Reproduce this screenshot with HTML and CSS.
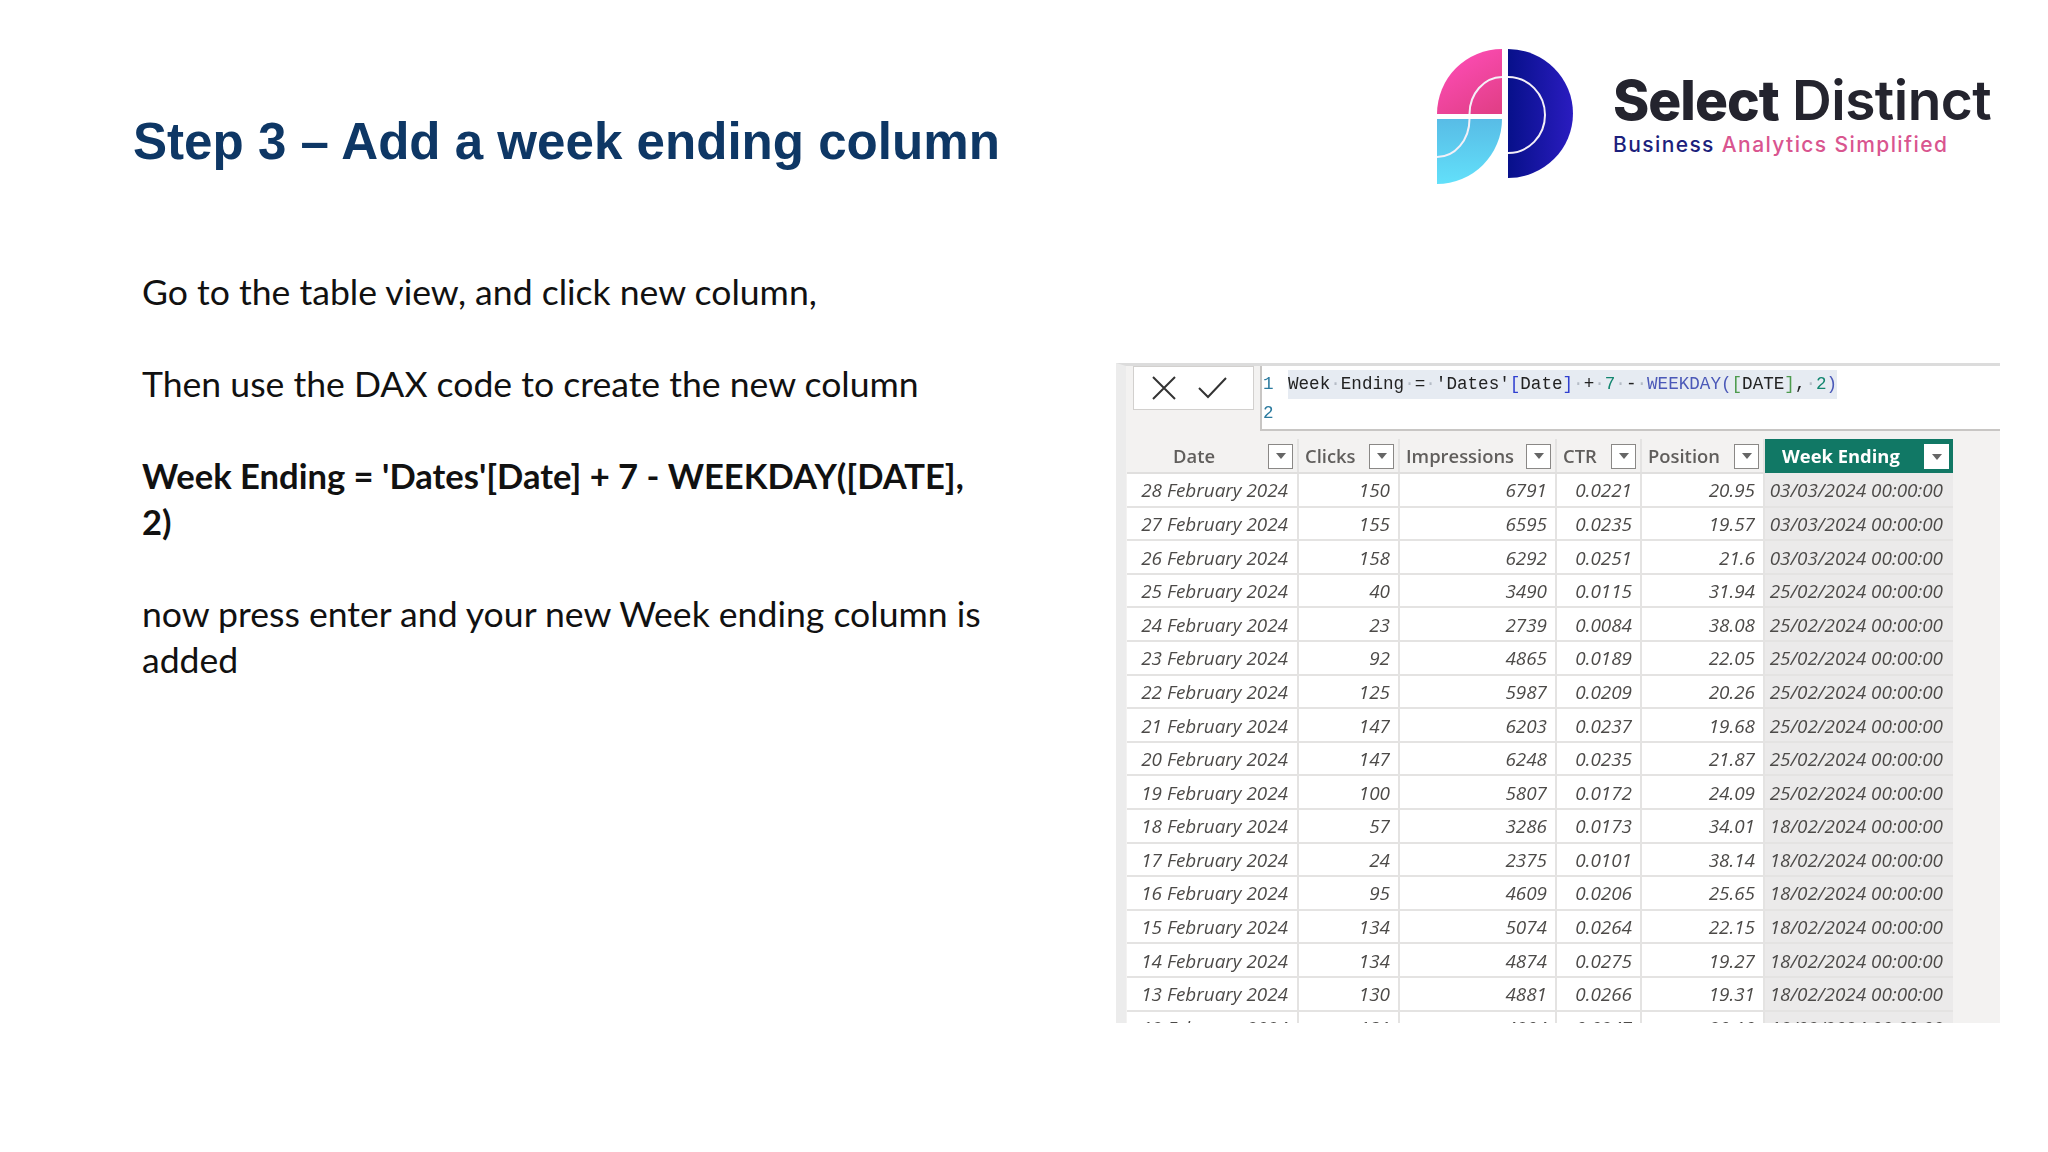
FILE: index.html
```html
<!DOCTYPE html>
<html lang="en">
<head>
<meta charset="utf-8">
<title>Step 3 – Add a week ending column</title>
<link rel="stylesheet" href="styles.css">
</head>
<body>
<main class="slide">
  <section class="left">
    <h1 class="title">Step 3 – Add a week ending column</h1>
    <p class="para">Go to the table view, and click new column,</p>
    <p class="para">Then use the DAX code to create the new column</p>
    <p class="para strong">Week Ending = 'Dates'[Date] + 7 - WEEKDAY([DATE], 2)</p>
    <p class="para">now press enter and your new Week ending column is added</p>
  </section>
  <section class="right">
    <div class="logo">
      <svg class="logo-mark" viewBox="1437 49 136 135" width="136" height="135" aria-hidden="true">
        <defs>
          <linearGradient id="gPink" x1="0.2" y1="0" x2="0.8" y2="1"><stop offset="0" stop-color="#ff4db8"/><stop offset="1" stop-color="#e23f88"/></linearGradient>
          <linearGradient id="gBlue" x1="0" y1="0" x2="0" y2="1"><stop offset="0" stop-color="#58bce6"/><stop offset="1" stop-color="#62e0fa"/></linearGradient>
          <linearGradient id="gNavy" x1="0" y1="0" x2="1" y2="0"><stop offset="0" stop-color="#07108a"/><stop offset="1" stop-color="#2a1cc0"/></linearGradient>
        </defs>
        <path d="M1437 114A65 65 0 0 1 1502 49V114Z" fill="url(#gPink)"/>
        <path d="M1437 119H1502A65 65 0 0 1 1437 184Z" fill="url(#gBlue)"/>
        <path d="M1508 49A65 64.5 0 0 1 1508 178Z" fill="url(#gNavy)"/>
        <path d="M1502 77A33 37 0 0 0 1469.500 114M1469.500 119A32.500 38 0 0 1 1437 157M1508 77A37 38 0 0 1 1508 153" fill="none" stroke="#f4f0f8" stroke-width="2"/>
      </svg>
      <div class="logo-text">
        <div class="logo-name"><b>Select</b> <span>Distinct</span></div>
        <div class="logo-tag"><span class="tag-navy">Business</span> <span class="tag-pink">Analytics Simplified</span></div>
      </div>
    </div>
    <div class="panel">
      <div class="formula-row">
        <div class="buttons">
          <svg class="icon-x" width="24" height="24" viewBox="0 0 24 24" aria-hidden="true"><path d="M1 1L23 23M23 1L1 23" stroke="#333" stroke-width="2" fill="none"/></svg>
          <svg class="icon-check" width="29" height="22" viewBox="0 0 29 22" aria-hidden="true"><path d="M1 11L10 20L28 1" stroke="#333" stroke-width="2" fill="none"/></svg>
        </div>
        <div class="formula">
          <div class="code-line"><span class="ln">1</span><code class="code"><span>Week</span><i>·</i><span>Ending</span><i>·</i><span>=</span><i>·</i><span>'Dates'</span><span class="c-br">[</span><span>Date</span><span class="c-br">]</span><i>·</i><span>+</span><i>·</i><span class="c-num">7</span><i>·</i><span>-</span><i>·</i><span class="c-fn">WEEKDAY(</span><span class="c-gr">[</span><span>DATE</span><span class="c-gr">]</span><span>,</span><i>·</i><span class="c-num">2</span><span class="c-fn">)</span></code></div>
          <div class="code-line"><span class="ln">2</span></div>
        </div>
      </div>
      <table class="grid">
        <colgroup><col class="c1"><col class="c2"><col class="c3"><col class="c4"><col class="c5"><col class="c6"></colgroup>
        <thead>
          <tr>
            <th><div class="th th-center"><span class="th-label">Date</span><span class="filter"></span></div></th>
            <th><div class="th"><span class="th-label">Clicks</span><span class="filter"></span></div></th>
            <th><div class="th"><span class="th-label">Impressions</span><span class="filter"></span></div></th>
            <th><div class="th"><span class="th-label">CTR</span><span class="filter"></span></div></th>
            <th><div class="th"><span class="th-label">Position</span><span class="filter"></span></div></th>
            <th class="active"><div class="th th-active"><span class="th-label">Week Ending</span><span class="filter"></span></div></th>
          </tr>
        </thead>
        <tbody>
          <tr><td>28 February 2024</td><td>150</td><td>6791</td><td>0.0221</td><td>20.95</td><td>03/03/2024 00:00:00</td></tr>
          <tr><td>27 February 2024</td><td>155</td><td>6595</td><td>0.0235</td><td>19.57</td><td>03/03/2024 00:00:00</td></tr>
          <tr><td>26 February 2024</td><td>158</td><td>6292</td><td>0.0251</td><td>21.6</td><td>03/03/2024 00:00:00</td></tr>
          <tr><td>25 February 2024</td><td>40</td><td>3490</td><td>0.0115</td><td>31.94</td><td>25/02/2024 00:00:00</td></tr>
          <tr><td>24 February 2024</td><td>23</td><td>2739</td><td>0.0084</td><td>38.08</td><td>25/02/2024 00:00:00</td></tr>
          <tr><td>23 February 2024</td><td>92</td><td>4865</td><td>0.0189</td><td>22.05</td><td>25/02/2024 00:00:00</td></tr>
          <tr><td>22 February 2024</td><td>125</td><td>5987</td><td>0.0209</td><td>20.26</td><td>25/02/2024 00:00:00</td></tr>
          <tr><td>21 February 2024</td><td>147</td><td>6203</td><td>0.0237</td><td>19.68</td><td>25/02/2024 00:00:00</td></tr>
          <tr><td>20 February 2024</td><td>147</td><td>6248</td><td>0.0235</td><td>21.87</td><td>25/02/2024 00:00:00</td></tr>
          <tr><td>19 February 2024</td><td>100</td><td>5807</td><td>0.0172</td><td>24.09</td><td>25/02/2024 00:00:00</td></tr>
          <tr><td>18 February 2024</td><td>57</td><td>3286</td><td>0.0173</td><td>34.01</td><td>18/02/2024 00:00:00</td></tr>
          <tr><td>17 February 2024</td><td>24</td><td>2375</td><td>0.0101</td><td>38.14</td><td>18/02/2024 00:00:00</td></tr>
          <tr><td>16 February 2024</td><td>95</td><td>4609</td><td>0.0206</td><td>25.65</td><td>18/02/2024 00:00:00</td></tr>
          <tr><td>15 February 2024</td><td>134</td><td>5074</td><td>0.0264</td><td>22.15</td><td>18/02/2024 00:00:00</td></tr>
          <tr><td>14 February 2024</td><td>134</td><td>4874</td><td>0.0275</td><td>19.27</td><td>18/02/2024 00:00:00</td></tr>
          <tr><td>13 February 2024</td><td>130</td><td>4881</td><td>0.0266</td><td>19.31</td><td>18/02/2024 00:00:00</td></tr>
          <tr><td>12 February 2024</td><td>131</td><td>4804</td><td>0.0247</td><td>20.10</td><td>18/02/2024 00:00:00</td></tr>
        </tbody>
      </table>
    </div>
  </section>
</main>
</body>
</html>
```
FILE: styles.css
```css
html, body { margin: 0; padding: 0; background: #fff; }
.slide { width: 2048px; height: 1152px; display: flex; overflow: hidden; background: #fff; }
.left { width: 1116px; flex: none; padding: 109px 0 0 133px; box-sizing: border-box; }
.title { margin: 0 0 94px; font: 700 51.1px/66px "Liberation Sans", Arial, sans-serif; color: #0e3765; white-space: nowrap; }
.para { margin: 0 0 46px 9px; width: 852px; font: 400 35.6px/46px Lato, "Open Sans", sans-serif; color: #111; }
.strong { font-weight: 700; font-size: 34.6px; }
.right { flex: none; width: 884px; padding-top: 49px; box-sizing: border-box; }
.logo { display: flex; height: 135px; margin: 0 0 179px 321px; }
.logo-mark { flex: none; display: block; }
.logo-text { margin-left: 40px; padding-top: 21px; }
.logo-name { font: 600 55px/60px Inter, sans-serif; color: #24242e; letter-spacing: -0.5px; white-space: nowrap; }
.logo-name b { font-weight: 800; letter-spacing: -1px; }
.logo-tag { margin-top: 2px; font: 500 21px/26px Inter, sans-serif; letter-spacing: 1.4px; white-space: nowrap; }
.tag-navy { color: #1c1f7c; }
.tag-pink { color: #d9558f; }
.panel { width: 884px; height: 660px; overflow: hidden; box-sizing: border-box; background: #f3f2f1; border-top: 3px solid #dcdcdc; border-left: 10px solid #ececec; filter: blur(0.35px); }
.formula-row { display: flex; height: 73px; align-items: flex-start; }
.buttons { flex: none; width: 121px; height: 44px; box-sizing: border-box; margin: 0 6px 0 7px; padding-left: 18px; display: flex; align-items: center; gap: 22px; background: #fff; border: 1px solid #d2d0ce; }
.formula { flex: 1; height: 65px; box-sizing: border-box; background: #fff; border-left: 2px solid #c8c6c4; border-bottom: 2px solid #c8c6c4; padding-top: 4px; }
.code-line { height: 29px; display: flex; align-items: center; font: 400 17.6px/29px "Liberation Mono", monospace; }
.ln { width: 26px; padding-left: 1px; box-sizing: border-box; color: #2b7a9e; }
.code { font: inherit; background: #e6ebf2; color: #222; white-space: pre; display: block; }
.code i { font-style: normal; color: #b5bcc6; }
.c-br { color: #2f3fd0; }
.c-gr { color: #4d9b4d; }
.c-num { color: #12866f; }
.c-fn { color: #4b59b8; }
.grid { margin-left: 1px; border-collapse: collapse; table-layout: fixed; width: 826px; font: italic 400 18.9px/1 "Open Sans", sans-serif; color: #4c4a48; }
.c1 { width: 171px; } .c2 { width: 101px; } .c3 { width: 157px; } .c4 { width: 85px; } .c5 { width: 123px; } .c6 { width: 189px; }
.grid th { height: 33px; padding: 0; background: #f3f2f1; border-right: 2px solid #e4e3e2; border-bottom: 2px solid #e0dfde; font: 600 18.4px/1 "Open Sans", sans-serif; color: #605e5c; text-align: left; }
.th { display: flex; align-items: center; justify-content: space-between; padding: 1px 4px 0 6px; height: 32px; box-sizing: content-box; }
.th-center .th-label { margin-left: 40px; }
.filter { flex: none; width: 25px; height: 25px; box-sizing: border-box; background: #fff; border: 1px solid #8a8886; display: flex; align-items: center; justify-content: center; }
.filter::before { content: ""; border: 5px solid transparent; border-top: 6px solid #666; border-bottom: 0; }
.grid th.active { background: #117865; border-right: 0; border-bottom: 0; }
.th-active { color: #fff; padding-left: 17px; font-weight: 700; }
.th-active .filter { border-color: #fff; }
.grid td { height: 29.6px; padding: 2px 8px 0 0; background: #fff; border-right: 2px solid #e4e3e2; border-bottom: 2px solid #e4e3e2; text-align: right; white-space: nowrap; overflow: hidden; }
.grid td:first-child { padding-right: 9px; }
.grid td:last-child { background: #ebeaea; border-right: 0; padding-right: 10px; }
```
